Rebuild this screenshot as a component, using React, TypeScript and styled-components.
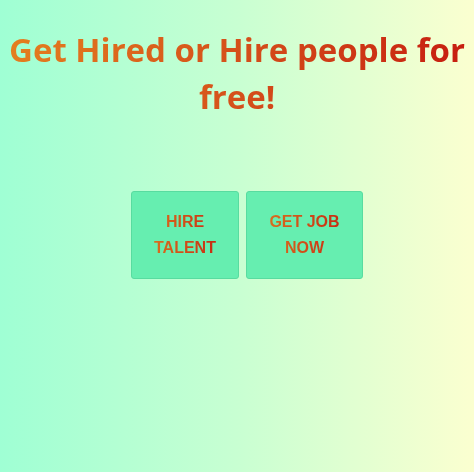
import styled, { createGlobalStyle } from "styled-components";

const GlobalStyle = createGlobalStyle`
  html, body {
    margin: 0;
    padding: 0;
  }
  body {
    font-family: "Open Sans", "Liberation Sans", sans-serif;
  }
`;

export default function App() {
  return (
    <Page>
      <GlobalStyle />
      <Title>Get Hired or Hire people for free!</Title>
      <ButtonRow>
        <ActionButton $width={108}>
          <ButtonText>HIRE TALENT</ButtonText>
        </ActionButton>
        <ActionButton $width={117}>
          <ButtonText>GET JOB NOW</ButtonText>
        </ActionButton>
      </ButtonRow>
    </Page>
  );
}

const Page = styled.div`
  width: 474px;
  height: 472px;
  box-sizing: border-box;
  background: linear-gradient(90deg, #9fffd4 0%, #c8ffd2 50%, #fbffd0 100%);
  display: flex;
  flex-direction: column;
  align-items: center;
  padding-top: 26px;
  overflow: hidden;
`;

const Title = styled.h1`
  margin: 0;
  padding: 0 4px;
  font-size: 33px;
  line-height: 47px;
  font-weight: 700;
  text-align: center;
  background: linear-gradient(90deg, #e4801f 0%, #d5501a 50%, #c61c10 100%);
  -webkit-background-clip: text;
  background-clip: text;
  color: transparent;
`;

const ButtonRow = styled.div`
  display: flex;
  gap: 7px;
  margin-top: 71px;
  padding-left: 20px;
`;

const ActionButton = styled.div<{ $width: number }>`
  width: ${(p) => p.$width}px;
  height: 88px;
  box-sizing: border-box;
  background: #66eeb0;
  border: 1px solid #58dca0;
  border-radius: 3px;
  display: flex;
  align-items: center;
  justify-content: center;
  padding: 0 20px;
`;

const ButtonText = styled.span`
  font-family: "Liberation Sans", Arial, sans-serif;
  font-size: 16px;
  font-weight: 700;
  line-height: 26px;
  text-align: center;
  background: linear-gradient(90deg, #d9701f 0%, #c82a12 100%);
  -webkit-background-clip: text;
  background-clip: text;
  color: transparent;
`;
